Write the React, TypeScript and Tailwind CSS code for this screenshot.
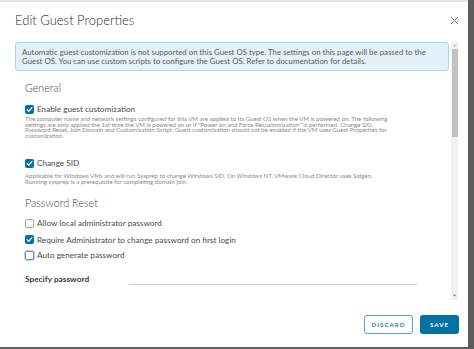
import React from "react";

function Check({ checked, focus }: { checked: boolean; focus?: boolean }) {
  if (checked) {
    return (
      <span className="w-[9px] h-[9px] rounded-[2px] bg-[#0072a3] flex items-center justify-center shrink-0">
        <svg width="7" height="7" viewBox="0 0 8 8">
          <path d="M1.3 4.2 L3.2 6 L6.8 1.9" stroke="white" strokeWidth="1.4" fill="none" strokeLinecap="round" strokeLinejoin="round" />
        </svg>
      </span>
    );
  }
  return (
    <span
      className={
        "w-[9px] h-[9px] rounded-[2px] bg-white shrink-0 border " +
        (focus ? "border-[#6f93b8] shadow-[0_0_0_1px_#b8d2ea]" : "border-[#a3a3a3]")
      }
    />
  );
}

function CheckRow({ checked, label, focus, className }: { checked: boolean; label: string; focus?: boolean; className?: string }) {
  return (
    <div className={"flex items-center gap-[3px] h-[10px] " + (className ?? "")}>
      <Check checked={checked} focus={focus} />
      <span className="text-[8.2px] leading-[10px] text-[#4a4a4a] whitespace-nowrap">{label}</span>
    </div>
  );
}

export default function App() {
  return (
    <div
      className="w-[474px] h-[349px] bg-[#5c5c5c] pr-[6px] pb-[2px] flex flex-col overflow-hidden"
      style={{ fontFamily: 'Lato, "Open Sans", "Liberation Sans", sans-serif' }}
    >
      <div className="flex-1 bg-white border-t-2 border-[#e6e6e6] flex flex-col">
        {/* header */}
        <div className="flex items-center justify-between pl-[15px] pr-[9px] pt-[8px] h-[28px] mb-[12px]">
          <span className="text-[13px] leading-[20px] font-light text-[#2b2b2b]">Edit Guest Properties</span>
          <svg width="9" height="9" viewBox="0 0 9 9">
            <path d="M1 1 L8 8 M8 1 L1 8" stroke="#6e6e6e" strokeWidth="0.9" />
          </svg>
        </div>

        {/* body */}
        <div className="flex h-[258px]">
          <div className="flex-1 pl-[15px] pr-[2px] flex flex-col">
            <div className="h-[29px] bg-[#e3f2f8] border border-[#a9d7ec] rounded-[3px] px-[6px] pt-[5px] text-[7.85px] leading-[8.6px] text-[#5a5a5a] whitespace-nowrap">
              Automatic guest customization is not supported on this Guest OS type. The settings on this page will be passed to the
              <br />
              Guest OS. You can use custom scripts to configure the Guest OS. Refer to documentation for details.
            </div>

            <div className="pl-[10px] flex flex-col">
              <div className="mt-[10px] text-[10.7px] leading-[14px] font-light text-[#444]">General</div>
              <CheckRow className="mt-[9px]" checked label="Enable guest customization" />
              <div className="mt-[2px] text-[6.12px] leading-[5.6px] text-[#8a8a8a] whitespace-nowrap">
                The computer name and network settings configured for this VM are applied to its Guest OS when the VM is powered on. The following
                <br />
                settings are only applied the 1st time the VM is powered on or if "Power on and Force Recustomization" is performed. Change SID,
                <br />
                Password Reset, Join Domain and Customization Script. Guest customization should not be enabled if the VM uses Guest Properties for
                <br />
                customization.
              </div>
              <CheckRow className="mt-[20px]" checked label="Change SID" />
              <div className="mt-[5px] text-[6.12px] leading-[5.6px] text-[#8a8a8a] whitespace-nowrap">
                Applicable for Windows VMs and will run Sysprep to change Windows SID. On Windows NT, VMware Cloud Director uses Sidgen.
                <br />
                Running sysprep is a prerequisite for completing domain join.
              </div>
              <div className="mt-[11px] text-[10.8px] leading-[14px] font-light text-[#444]">Password Reset</div>
              <CheckRow className="mt-[8.5px]" checked={false} label="Allow local administrator password" />
              <CheckRow className="mt-[6.7px]" checked label="Require Administrator to change password on first login" />
              <CheckRow className="mt-[5.7px]" checked={false} focus label="Auto generate password" />
              <div className="mt-[13.6px] flex items-start mr-[32px]">
                <span className="w-[104px] text-[8.3px] leading-[10px] font-bold text-[#3a3a3a]">Specify password</span>
                <div className="flex-1 h-[11px] border-b border-[#c8c8c8]" />
              </div>
            </div>
          </div>

          {/* scrollbar */}
          <div className="w-[7px] mr-[10px] bg-[#f1f1f1] flex flex-col items-center">
            <svg width="7" height="7" viewBox="0 0 7 7" className="shrink-0">
              <path d="M2 4.3 L3.5 2.6 L5 4.3 Z" fill="#a3a3a3" />
            </svg>
            <div className="w-[6px] h-[88px] bg-[#c1c1c1]" />
            <div className="flex-1" />
            <svg width="7" height="7" viewBox="0 0 7 7" className="shrink-0 mb-[1px]">
              <path d="M2 2.7 L3.5 4.4 L5 2.7 Z" fill="#6e6e6e" />
            </svg>
          </div>
        </div>

        {/* footer */}
        <div className="flex justify-end items-center gap-[7px] pr-[9px] mt-[15px]">
          <button className="w-[49px] h-[19px] rounded-[3px] border border-[#5a9fc6] bg-white text-[6.2px] font-bold tracking-[1px] text-[#2d7fae]">
            DISCARD
          </button>
          <button className="w-[39px] h-[19px] rounded-[3px] bg-[#0072a3] text-[6.2px] font-bold tracking-[1px] text-white">
            SAVE
          </button>
        </div>
      </div>
    </div>
  );
}
